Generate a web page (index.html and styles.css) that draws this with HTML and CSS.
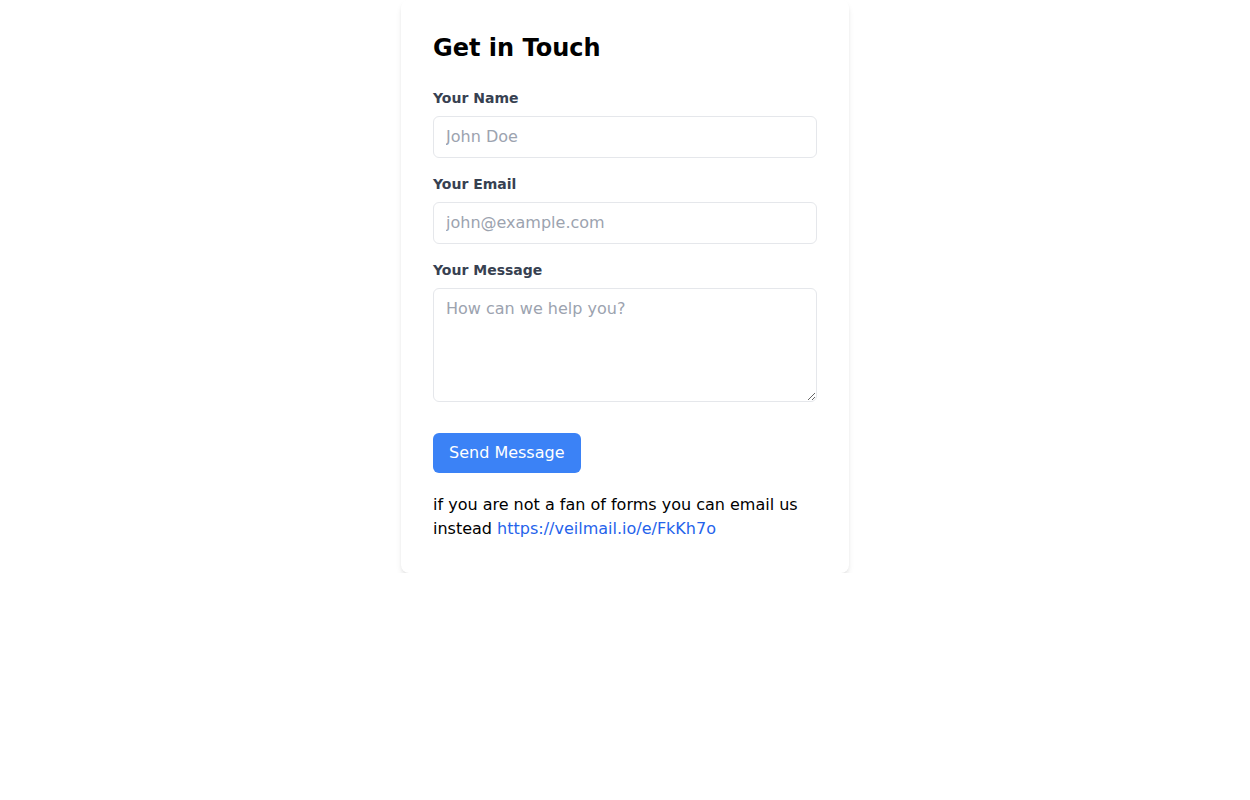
FILE: index.html
```html
<!DOCTYPE html>
<html lang="en">
<head>
<meta charset="utf-8">
<title>Get in Touch</title>
<link rel="stylesheet" href="styles.css">
</head>
<body>
<div class="card">
  <h1 class="title">Get in Touch</h1>
  <form class="form">
    <div class="field">
      <label class="label" for="name">Your Name</label>
      <input class="input" id="name" type="text" placeholder="John Doe">
    </div>
    <div class="field">
      <label class="label" for="email">Your Email</label>
      <input class="input" id="email" type="email" placeholder="john@example.com">
    </div>
    <div class="field field-last">
      <label class="label" for="msg">Your Message</label>
      <textarea class="input textarea" id="msg" rows="4" placeholder="How can we help you?"></textarea>
    </div>
    <button class="btn" type="button">Send Message</button>
  </form>
  <p class="note">if you are not a fan of forms you can email us instead <a class="link" href="#">https://veilmail.io/e/FkKh7o</a></p>
</div>
</body>
</html>
```
FILE: styles.css
```css
* { box-sizing: border-box; }
html, body { margin: 0; padding: 0; background: #fff; }
body {
  font-family: "DejaVu Sans", sans-serif;
  font-size: 16px;
  line-height: 24px;
  color: #000;
}
.card {
  width: 448px;
  margin: 0 auto;
  padding: 32px;
  background: #fff;
  border-radius: 8px;
  box-shadow: 0 4px 6px -1px rgba(0,0,0,0.1), 0 2px 4px -2px rgba(0,0,0,0.1);
}
.title {
  margin: 0 0 24px;
  font-size: 24px;
  line-height: 32px;
  font-weight: 700;
}
.form { margin: 0; }
.field { margin-bottom: 16px; }
.field-last { margin-bottom: 31px; }
.label {
  display: block;
  margin-bottom: 8px;
  font-size: 14px;
  line-height: 20px;
  font-weight: 700;
  color: #374151;
}
.input {
  display: block;
  width: 100%;
  margin: 0;
  padding: 8px 12px;
  border: 1px solid #e5e7eb;
  border-radius: 6px;
  font-family: inherit;
  font-size: 16px;
  line-height: 24px;
  color: #000;
  background: #fff;
  outline: none;
}
.input::placeholder { color: #9ca3af; opacity: 1; }
.textarea { height: 114px; resize: vertical; }
.btn {
  display: block;
  margin: 0;
  padding: 8px 16px;
  border: 0;
  border-radius: 6px;
  background: #3b82f6;
  color: #fff;
  font-family: inherit;
  font-size: 16px;
  line-height: 24px;
  cursor: pointer;
}
.note { margin: 20px 0 0; }
.link { color: #2563eb; text-decoration: none; }
```
